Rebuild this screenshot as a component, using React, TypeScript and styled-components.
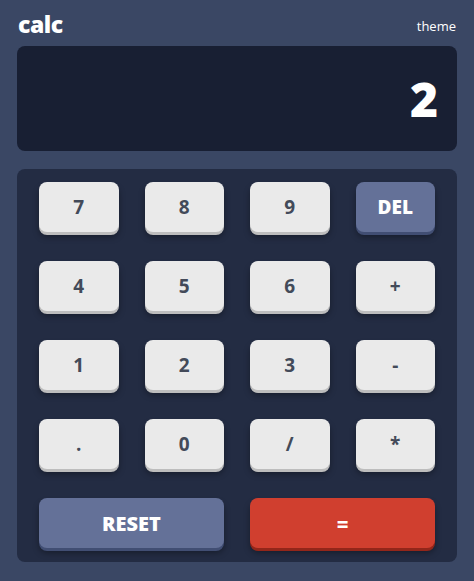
import styled, { createGlobalStyle } from "styled-components";

const GlobalStyle = createGlobalStyle`
  html, body {
    margin: 0;
    padding: 0;
    background: #3a4764;
  }
  * {
    box-sizing: border-box;
  }
`;

const Page = styled.div`
  width: 474px;
  height: 581px;
  background: #3a4764;
  padding: 12px 17px 19px;
  display: flex;
  flex-direction: column;
  font-family: "Open Sans", "Liberation Sans", sans-serif;
`;

const Header = styled.header`
  display: flex;
  align-items: center;
  justify-content: space-between;
  height: 24px;
  margin-bottom: 10px;
  padding-left: 1px;
`;

const Logo = styled.h1`
  margin: 0;
  font-size: 23px;
  font-weight: 800;
  color: #ffffff;
  letter-spacing: -0.5px;
  line-height: 1;
`;

const ThemeLabel = styled.span`
  font-size: 13px;
  color: #ffffff;
  padding-top: 4px;
  padding-right: 1px;
`;

const Screen = styled.div`
  height: 105px;
  background: #181f33;
  border-radius: 8px;
  display: flex;
  align-items: center;
  justify-content: flex-end;
  padding: 0 19px 0 0;
  margin-bottom: 18px;
`;

const ScreenValue = styled.span`
  font-size: 48px;
  font-weight: 800;
  color: #ffffff;
  line-height: 1;
`;

const Keypad = styled.div`
  flex: 1;
  background: #232c43;
  border-radius: 8px;
  padding: 13px 22px 13px 22px;
  display: grid;
  grid-template-columns: repeat(4, 1fr);
  grid-auto-rows: 50px;
  column-gap: 26px;
  row-gap: 29px;
`;

type Variant = "num" | "muted" | "accent";

const Key = styled.button<{ $variant?: Variant; $wide?: boolean }>`
  grid-column: ${(p) => (p.$wide ? "span 2" : "span 1")};
  border: none;
  border-radius: 8px;
  font-family: "Open Sans", "Liberation Sans", sans-serif;
  font-weight: ${(p) => (p.$variant === "num" ? 700 : 800)};
  cursor: pointer;
  font-size: ${(p) => (p.$wide ? "20px" : "19px")};
  background: ${(p) =>
    p.$variant === "muted" ? "#647198" : p.$variant === "accent" ? "#d03f2f" : "#eaeaea"};
  color: ${(p) => (p.$variant === "num" ? "#434a59" : "#ffffff")};
  box-shadow:
    0 3px 0 ${(p) =>
      p.$variant === "muted" ? "#414e73" : p.$variant === "accent" ? "#93261a" : "#bdbdbd"},
    0 5px 6px rgba(0, 0, 0, 0.35);
`;

const keys = ["7", "8", "9", "DEL", "4", "5", "6", "+", "1", "2", "3", "-", ".", "0", "/", "*"];

const App = () => {
  return (
    <>
      <GlobalStyle />
      <Page>
        <Header>
          <Logo>calc</Logo>
          <ThemeLabel>theme</ThemeLabel>
        </Header>
        <Screen>
          <ScreenValue>2</ScreenValue>
        </Screen>
        <Keypad>
          {keys.map((k) => (
            <Key key={k} $variant={k === "DEL" ? "muted" : "num"}>
              {k}
            </Key>
          ))}
          <Key $variant="muted" $wide>
            RESET
          </Key>
          <Key $variant="accent" $wide>
            =
          </Key>
        </Keypad>
      </Page>
    </>
  );
};

export default App;
